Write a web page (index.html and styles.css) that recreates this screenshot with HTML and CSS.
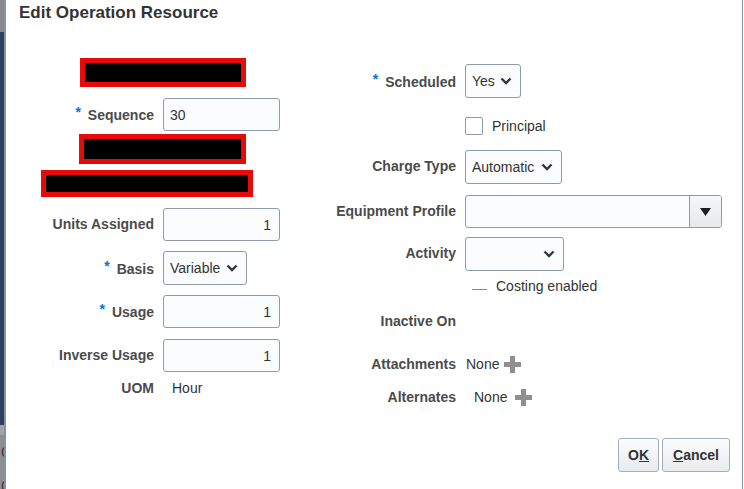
FILE: index.html
```html
<!DOCTYPE html>
<html>
<head>
<meta charset="utf-8">
<link rel="stylesheet" href="styles.css">
</head>
<body>
<div class="screen">
  <div class="backdrop">
    <div class="bd-top"></div>
    <div class="bd-mid"></div>
    <div class="bd-bot"><span class="bd-char">0</span><span class="bd-char">0</span></div>
  </div>
  <div class="dialog">
    <div class="title">Edit Operation Resource</div>
    <div class="body">
      <div class="col col-left">
        <div class="redact r1"></div>
        <div class="row seq-row">
          <div class="label"><span class="req">*</span>Sequence</div>
          <div class="input">30</div>
        </div>
        <div class="redact r2"></div>
        <div class="redact r3"></div>
        <div class="row units-row">
          <div class="label">Units Assigned</div>
          <div class="input num">1</div>
        </div>
        <div class="row basis-row">
          <div class="label"><span class="req">*</span>Basis</div>
          <div class="select w-var">Variable<svg class="chev" width="12" height="8" viewBox="0 0 12 8"><polyline points="1.5,1.5 6,6 10.5,1.5" fill="none" stroke="#333" stroke-width="2.3"/></svg></div>
        </div>
        <div class="row usage-row">
          <div class="label"><span class="req">*</span>Usage</div>
          <div class="input num">1</div>
        </div>
        <div class="row inv-row">
          <div class="label">Inverse Usage</div>
          <div class="input num">1</div>
        </div>
        <div class="row text-row uom-row">
          <div class="label">UOM</div>
          <div class="value indent">Hour</div>
        </div>
      </div>
      <div class="col col-right">
        <div class="row sched-row">
          <div class="label"><span class="req">*</span>Scheduled</div>
          <div class="select w-yes">Yes<svg class="chev" width="12" height="8" viewBox="0 0 12 8"><polyline points="1.5,1.5 6,6 10.5,1.5" fill="none" stroke="#333" stroke-width="2.3"/></svg></div>
        </div>
        <div class="row check-row">
          <div class="label"></div>
          <div class="check-wrap"><span class="checkbox"></span><span class="value">Principal</span></div>
        </div>
        <div class="row charge-row">
          <div class="label">Charge Type</div>
          <div class="select w-auto">Automatic<svg class="chev" width="12" height="8" viewBox="0 0 12 8"><polyline points="1.5,1.5 6,6 10.5,1.5" fill="none" stroke="#333" stroke-width="2.3"/></svg></div>
        </div>
        <div class="row equip-row">
          <div class="label">Equipment Profile</div>
          <div class="combo">
            <div class="combo-field"></div>
            <div class="combo-btn"><svg width="11" height="8" viewBox="0 0 11 8"><polygon points="0,0 11,0 5.5,8" fill="#1e1e1e"/></svg></div>
          </div>
        </div>
        <div class="row act-row">
          <div class="label">Activity</div>
          <div class="select w-act"><svg class="chev" width="12" height="8" viewBox="0 0 12 8"><polyline points="1.5,1.5 6,6 10.5,1.5" fill="none" stroke="#333" stroke-width="2.3"/></svg></div>
        </div>
        <div class="row text-row cost-row">
          <div class="label"></div>
          <div class="cost-wrap"><span class="dash"></span><span class="value">Costing enabled</span></div>
        </div>
        <div class="row text-row inactive-row">
          <div class="label">Inactive On</div>
          <div class="value"></div>
        </div>
        <div class="row text-row attach-row">
          <div class="label">Attachments</div>
          <div class="link-wrap"><span class="value">None</span><svg class="plus" width="17" height="17" viewBox="0 0 17 17"><rect x="6" y="0" width="5" height="17" fill="#8f8f8f"/><rect x="0" y="6" width="17" height="5" fill="#8f8f8f"/></svg></div>
        </div>
        <div class="row text-row alt-row">
          <div class="label">Alternates</div>
          <div class="link-wrap alt-wrap"><span class="value">None</span><svg class="plus" width="17" height="17" viewBox="0 0 17 17"><rect x="6" y="0" width="5" height="17" fill="#8f8f8f"/><rect x="0" y="6" width="17" height="5" fill="#8f8f8f"/></svg></div>
        </div>
      </div>
    </div>
    <div class="footer">
      <button class="btn btn-ok">O<u>K</u></button>
      <button class="btn btn-cancel"><u>C</u>ancel</button>
    </div>
  </div>
  <div class="edge"></div>
</div>
</body>
</html>
```

FILE: styles.css
```css
* { box-sizing: border-box; }
html, body { margin: 0; padding: 0; background: #fff; }
body {
  font-family: "Liberation Sans", Arial, sans-serif;
  font-size: 14px;
  color: #333;
}
.screen {
  display: flex;
  width: 744px;
  height: 489px;
  overflow: hidden;
}
.backdrop {
  width: 4px;
  display: flex;
  flex-direction: column;
}
.bd-top { height: 32px; background: #8a8a8a; }
.bd-mid { height: 393px; background: #2f3e5c; }
.bd-bot {
  flex: 1;
  background: linear-gradient(#a3a3a3 0, #a3a3a3 10px, #8e8e8e 10px);
  overflow: hidden;
  display: flex;
  flex-direction: column;
  align-items: flex-end;
  padding-top: 10px;
}
.bd-char {
  font-size: 14px;
  line-height: 34px;
  color: #333;
  margin-right: -5px;
}
.dialog {
  width: 739px;
  border-left: 2px solid #7f94aa;
  border-right: 1px solid #8195aa;
  background: #fff;
  display: flex;
  flex-direction: column;
  height: 489px;
}
.edge { width: 1px; background: #fff; }
.title {
  height: 40px;
  padding: 3px 0 0 13px;
  font-size: 17px;
  line-height: 20px;
  font-weight: bold;
  color: #333;
}
.body {
  flex: 1;
  display: flex;
}
.col { display: flex; flex-direction: column; }
.col-left { width: 300px; }
.col-right { flex: 1; }
.row {
  display: grid;
  align-items: center;
  column-gap: 9px;
}
.col-left .row { grid-template-columns: 148px auto; }
.col-right .row { grid-template-columns: 150px auto; }
.label {
  text-align: right;
  font-weight: bold;
  color: #4b4b4b;
  white-space: nowrap;
  line-height: 20px;
  padding-bottom: 2px;
}
.text-row .label { padding-bottom: 0; }
.req {
  color: #0572ce;
  font-weight: bold;
  margin-right: 7px;
  vertical-align: 3px;
}
.value { color: #333; line-height: 20px; white-space: nowrap; }
.indent { padding-left: 9px; }
.text-row { height: 20px; }

.input {
  width: 117px;
  height: 33px;
  border: 1px solid #8d9bab;
  border-radius: 3px;
  background: #fbfcfe;
  padding: 0 6px;
  display: flex;
  align-items: center;
  color: #333;
}
.input.num { justify-content: flex-end; padding-right: 8px; }

.select {
  height: 34px;
  border: 1px solid #8d9bab;
  border-radius: 3px;
  background: #fbfcfe;
  padding: 0 8px 0 6px;
  display: flex;
  align-items: center;
  color: #333;
}
.select .chev { margin-left: auto; flex: none; }
.w-yes { width: 56px; }
.w-var { width: 84px; }
.w-auto { width: 97px; }
.w-act { width: 99px; }

.redact {
  border: 5px solid #e50b0b;
  background: #000;
}
.r1 { margin: 18px 0 0 74px; width: 166px; height: 29px; }
.r2 { margin: 3px 0 0 73px; width: 167px; height: 30px; }
.r3 { margin: 6px 0 0 35px; width: 212px; height: 27px; }

.seq-row { margin-top: 11px; }
.units-row { margin-top: 11px; }
.basis-row { margin-top: 10px; }
.usage-row { margin-top: 10px; }
.inv-row { margin-top: 11px; }
.uom-row { margin-top: 6px; }

.sched-row { margin-top: 24px; }
.check-row { margin-top: 18px; height: 18px; }
.charge-row { margin-top: 16px; }
.equip-row { margin-top: 11px; }
.act-row { margin-top: 9px; }
.cost-row { margin-top: 5px; }
.inactive-row { margin-top: 15px; }
.attach-row { margin-top: 23px; }
.alt-row { margin-top: 13px; }

.check-wrap { display: flex; align-items: center; gap: 9px; }
.checkbox {
  width: 18px;
  height: 18px;
  border: 1px solid #8d9bab;
  border-radius: 2px;
  background: #fff;
}
.combo {
  width: 257px;
  height: 33px;
  display: flex;
  border: 1px solid #8d9bab;
  border-radius: 3px;
  background: #fbfcfe;
  overflow: hidden;
}
.combo-field { flex: 1; }
.combo-btn {
  width: 32px;
  border-left: 1px solid #8d9bab;
  background: linear-gradient(#f6f7f8, #e6e8ea);
  display: flex;
  align-items: center;
  justify-content: center;
}
.cost-wrap { display: flex; align-items: center; padding-left: 7px; }
.dash {
  width: 15px;
  height: 1px;
  background: #8a8a8a;
  margin-top: 6px;
  margin-right: 9px;
}
.link-wrap { display: flex; align-items: center; padding-left: 1px; gap: 5px; }
.alt-wrap { padding-left: 9px; gap: 8px; }
.plus { flex: none; }

.footer {
  display: flex;
  justify-content: flex-end;
  gap: 3px;
  padding: 0 12px 17px 0;
}
.btn {
  height: 34px;
  border: 1px solid #a3afba;
  border-radius: 3px;
  background: linear-gradient(#fbfcfc, #e8ebee);
  font-family: "Liberation Sans", Arial, sans-serif;
  font-size: 14px;
  font-weight: bold;
  color: #333;
  padding: 0 9px;
}
.btn-cancel { padding: 0 10px; }
.btn u { text-decoration: underline; }
```
